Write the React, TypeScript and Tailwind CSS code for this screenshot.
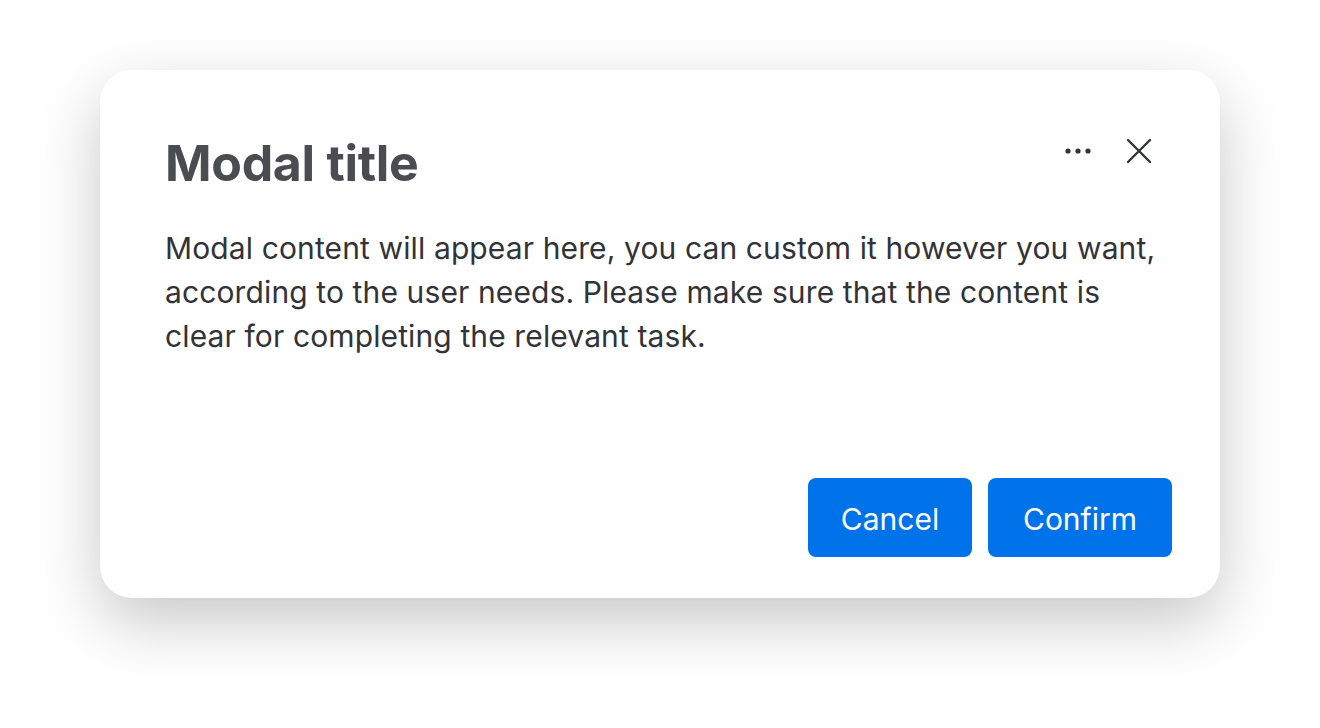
import React from "react";

export default function App() {
  return (
    <div className="w-[1320px] h-[728px] bg-white pt-[70px] pl-[100px]">
      <div className="w-[1120px] h-[528px] rounded-[32px] bg-white shadow-[0_24px_64px_rgba(0,0,0,0.22)] flex flex-col pl-[65px] pr-[48px] pt-[63px]">
        <div className="flex items-start justify-between pr-[20px]">
          <h1
            className="text-[50px] leading-[60px] font-bold text-[#4b4c51] tracking-[-0.3px]"
            style={{ fontFamily: "Inter, 'Open Sans', sans-serif" }}
          >
            Modal title
          </h1>
          <div className="flex items-center gap-[34px] mt-[5px]">
            <svg width="28" height="8" viewBox="0 0 28 8" className="text-[#323338]">
              <circle cx="4" cy="4" r="2.6" fill="currentColor" />
              <circle cx="14" cy="4" r="2.6" fill="currentColor" />
              <circle cx="24" cy="4" r="2.6" fill="currentColor" />
            </svg>
            <svg width="26" height="26" viewBox="0 0 26 26" className="text-[#323338]">
              <path d="M2 2L24 24M24 2L2 24" stroke="currentColor" strokeWidth="2.4" strokeLinecap="round" />
            </svg>
          </div>
        </div>
        <p
          className="mt-[33px] text-[30px] leading-[44px] text-[#323338] tracking-[0.12px]"
          style={{ fontFamily: "Inter, 'Noto Sans', sans-serif" }}
        >
          Modal content will appear here, you can custom it however you want,
          <br />
          according to the user needs. Please make sure that the content is
          <br />
          clear for completing the relevant task.
        </p>
        <div className="mt-auto mb-[41px] flex justify-end gap-[16px]">
          <button
            className="w-[164px] h-[79px] pt-[3px] rounded-[8px] bg-[#0073ea] text-white text-[30px]"
            style={{ fontFamily: "Inter, 'Noto Sans', sans-serif" }}
          >
            Cancel
          </button>
          <button
            className="w-[184px] h-[79px] pt-[3px] rounded-[8px] bg-[#0073ea] text-white text-[30px]"
            style={{ fontFamily: "Inter, 'Noto Sans', sans-serif" }}
          >
            Confirm
          </button>
        </div>
      </div>
    </div>
  );
}
